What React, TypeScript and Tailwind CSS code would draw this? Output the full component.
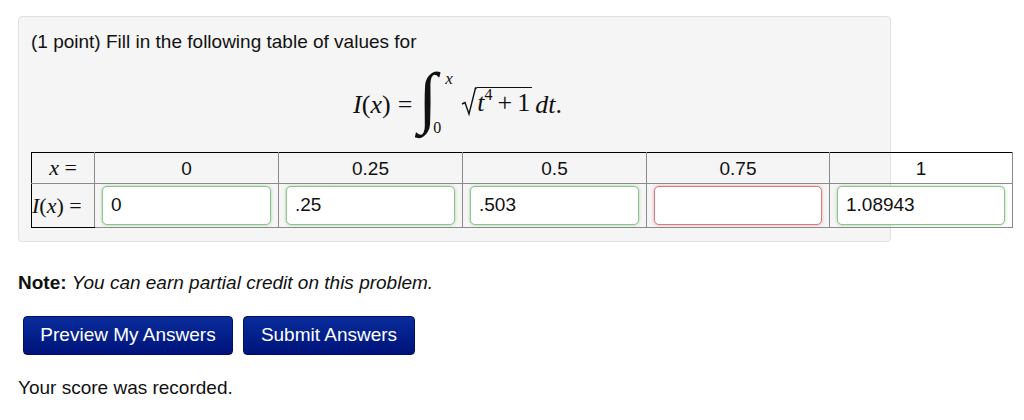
import React from "react";

const serif = { fontFamily: '"Liberation Serif", "DejaVu Serif", serif' };

function Formula() {
  return (
    <div className="flex justify-center items-center h-[90px] pt-[14px] leading-none text-[#111]" style={serif}>
      <div className="flex items-center mr-[6px]">
        <span className="text-[26px] whitespace-nowrap">
          <span className="italic">I</span>(<span className="italic">x</span>)<span className="ml-[7px]">=</span>
        </span>
        <span className="relative inline-block w-[40px] h-[68px] ml-[6px]">
          <span className="absolute left-[0px] top-[-8px] text-[68px] italic leading-none">∫</span>
          <span className="absolute left-[27px] top-[-1px] text-[17px] italic">x</span>
          <span className="absolute left-[15px] top-[49px] text-[16px]">0</span>
        </span>
        <span className="ml-[3px] inline-flex items-start mt-[-4px]">
          <svg width="16" height="30" viewBox="0 0 16 30" className="block">
            <path d="M1 17 L4 15.5 L8 27 L14.5 1 L16 1" fill="none" stroke="#111" strokeWidth="1.4" strokeLinejoin="miter" />
          </svg>
          <span className="border-t-[1.5px] border-[#111] text-[26px] leading-[28px] pt-[1px] pr-[2px] whitespace-nowrap">
            <span className="italic">t</span>
            <span className="relative text-[16px] top-[-11px]">4</span>
            <span className="ml-[5px]">+</span>
            <span className="ml-[5px]">1</span>
          </span>
        </span>
        <span className="ml-[3px] text-[26px]">
          <span className="italic">dt</span>.
        </span>
      </div>
    </div>
  );
}

function Cell({ value, state }: { value: string; state: "ok" | "bad" }) {
  const cls =
    state === "ok"
      ? "border-[#8cc48c] shadow-[0_0_3px_rgba(80,160,80,0.5)]"
      : "border-[#db7a7d] shadow-[0_0_3px_rgba(200,80,80,0.5)]";
  return (
    <td className="border border-[#8a8a8a] px-[7px] py-0">
      <div className={`h-[39px] w-full bg-white border rounded-[5px] flex items-center pl-[8px] text-[19px] text-[#111] ${cls}`}>
        {value}
      </div>
    </td>
  );
}

export default function App() {
  const font = { fontFamily: '"Liberation Sans", Arial, sans-serif' };
  const xs = ["0", "0.25", "0.5", "0.75", "1"];
  const vals: [string, "ok" | "bad"][] = [
    ["0", "ok"],
    [".25", "ok"],
    [".503", "ok"],
    ["", "bad"],
    ["1.08943", "ok"],
  ];
  return (
    <div className="w-[1024px] h-[420px] bg-white text-[#111] pt-[16px] pl-[18px]" style={font}>
      <div className="w-[873px] h-[226px] bg-[#f5f5f5] border border-[#e1e1e1] rounded-[4px] pt-[14px] pl-[12px]">
        <div className="text-[19px] leading-[22px]">(1 point) Fill in the following table of values for</div>
        <Formula />
        <table className="mt-[9px] border-collapse border border-black table-fixed w-[981px] text-[19px]">
          <colgroup>
            <col className="w-[63px]" />
            <col className="w-[184px]" />
            <col className="w-[184px]" />
            <col className="w-[184px]" />
            <col className="w-[183px]" />
            <col className="w-[183px]" />
          </colgroup>
          <tbody>
            <tr className="h-[31px]">
              <td className="border border-[#8a8a8a] border-l-black border-t-black text-center text-[22px] leading-none" style={serif}>
                <span className="italic">x</span> =
              </td>
              {xs.map((x) => (
                <td key={x} className="border border-[#8a8a8a] border-t-black text-center leading-none">
                  {x}
                </td>
              ))}
            </tr>
            <tr className="h-[44px]">
              <td className="border border-[#8a8a8a] border-l-black border-b-black text-[22px] leading-none whitespace-nowrap pl-0" style={serif}>
                <span className="italic">I</span>(<span className="italic">x</span>) =
              </td>
              {vals.map(([v, s], i) => (
                <Cell key={i} value={v} state={s} />
              ))}
            </tr>
          </tbody>
        </table>
      </div>
      <div className="mt-[30px] text-[19px] leading-[22px]">
        <span className="font-bold">Note:</span> <span className="italic">You can earn partial credit on this problem.</span>
      </div>
      <div className="flex gap-[10px] mt-[22px] ml-[5px]">
        <button className="h-[39px] w-[210px] rounded-[4px] bg-gradient-to-b from-[#0a2c9c] to-[#00137a] border border-[#00105e] text-white text-[19px]">
          Preview My Answers
        </button>
        <button className="h-[39px] w-[172px] rounded-[4px] bg-gradient-to-b from-[#0a2c9c] to-[#00137a] border border-[#00105e] text-white text-[19px]">
          Submit Answers
        </button>
      </div>
      <div className="mt-[22px] text-[19px] leading-[22px]">Your score was recorded.</div>
    </div>
  );
}
